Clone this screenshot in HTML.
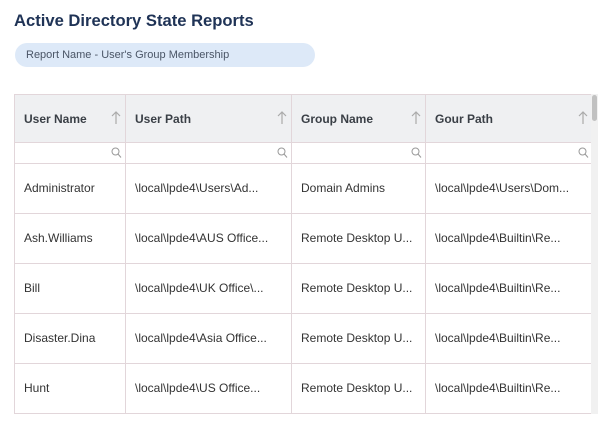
<!DOCTYPE html>
<html><head><style>
*{margin:0;padding:0;box-sizing:border-box}
body{width:612px;height:430px;background:#fff;font-family:"Liberation Sans",sans-serif;position:relative;overflow:hidden}
h1{position:absolute;left:14px;top:11px;font-size:16.6px;font-weight:bold;color:#1f3356;letter-spacing:0}
.pill{position:absolute;left:15px;top:43px;width:300px;height:24px;border-radius:12px;background:#dde9f8;font-size:11px;color:#4a5566;line-height:24px;padding-left:11px}
.tbl{position:absolute;left:14px;top:94px;width:578px;height:320px;border:1px solid #e2d6da;border-right:none;overflow:hidden}
.row{position:absolute;left:0;width:577px;border-bottom:1px solid #e2d6da}
.c{position:absolute;top:0;height:100%;border-right:1px solid #e2d6da;font-size:12px;color:#333;padding-left:9px;white-space:nowrap}
.hd{background:#eff0f2;top:0;height:48px}
.hd .c{font-weight:bold;color:#3a3f46;line-height:48px;font-size:12px}
.arrow{position:absolute;right:4px;top:16px}
.fl{top:48px;height:21px}
.q{position:absolute;right:3px;top:4px}
.d .c{line-height:49px}
.sb{position:absolute;left:591px;top:94px;width:7px;height:320px;background:#f1f1f1}
.th{position:absolute;left:592px;top:95px;width:5px;height:26px;background:#c1c1c1;border-radius:3px}
</style></head><body>
<h1>Active Directory State Reports</h1>
<div class="pill">Report Name - User's Group Membership</div>
<div class="tbl">
<div class="row hd">
<div class="c" style="left:0;width:111px">User Name<svg class="arrow" width="10" height="14" viewBox="0 0 10 14"><path d="M5 1v12M1 5l4-4 4 4" fill="none" stroke="#aaa" stroke-width="1.2"/></svg></div>
<div class="c" style="left:111px;width:166px">User Path<svg class="arrow" width="10" height="14" viewBox="0 0 10 14"><path d="M5 1v12M1 5l4-4 4 4" fill="none" stroke="#aaa" stroke-width="1.2"/></svg></div>
<div class="c" style="left:277px;width:134px">Group Name<svg class="arrow" width="10" height="14" viewBox="0 0 10 14"><path d="M5 1v12M1 5l4-4 4 4" fill="none" stroke="#aaa" stroke-width="1.2"/></svg></div>
<div class="c" style="left:411px;width:166px;border-right:none">Gour Path<svg class="arrow" width="10" height="14" viewBox="0 0 10 14"><path d="M5 1v12M1 5l4-4 4 4" fill="none" stroke="#aaa" stroke-width="1.2"/></svg></div>
</div>
<div class="row fl">
<div class="c" style="left:0;width:111px"><svg class="q" width="11" height="12" viewBox="0 0 11 12"><circle cx="4.5" cy="4.5" r="3.5" fill="none" stroke="#999"/><path d="M7 7l3 3.5" stroke="#999"/></svg></div>
<div class="c" style="left:111px;width:166px"><svg class="q" width="11" height="12" viewBox="0 0 11 12"><circle cx="4.5" cy="4.5" r="3.5" fill="none" stroke="#999"/><path d="M7 7l3 3.5" stroke="#999"/></svg></div>
<div class="c" style="left:277px;width:134px"><svg class="q" width="11" height="12" viewBox="0 0 11 12"><circle cx="4.5" cy="4.5" r="3.5" fill="none" stroke="#999"/><path d="M7 7l3 3.5" stroke="#999"/></svg></div>
<div class="c" style="left:411px;width:166px;border-right:none"><svg class="q" width="11" height="12" viewBox="0 0 11 12"><circle cx="4.5" cy="4.5" r="3.5" fill="none" stroke="#999"/><path d="M7 7l3 3.5" stroke="#999"/></svg></div>
</div>
<div class="row d" style="top:69px;height:50px">
<div class="c" style="left:0;width:111px">Administrator</div><div class="c" style="left:111px;width:166px">\local\lpde4\Users\Ad...</div><div class="c" style="left:277px;width:134px">Domain Admins</div><div class="c" style="left:411px;width:166px;border-right:none">\local\lpde4\Users\Dom...</div></div>
<div class="row d" style="top:119px;height:50px">
<div class="c" style="left:0;width:111px">Ash.Williams</div><div class="c" style="left:111px;width:166px">\local\lpde4\AUS Office...</div><div class="c" style="left:277px;width:134px">Remote Desktop U...</div><div class="c" style="left:411px;width:166px;border-right:none">\local\lpde4\Builtin\Re...</div></div>
<div class="row d" style="top:169px;height:50px">
<div class="c" style="left:0;width:111px">Bill</div><div class="c" style="left:111px;width:166px">\local\lpde4\UK Office\...</div><div class="c" style="left:277px;width:134px">Remote Desktop U...</div><div class="c" style="left:411px;width:166px;border-right:none">\local\lpde4\Builtin\Re...</div></div>
<div class="row d" style="top:219px;height:50px">
<div class="c" style="left:0;width:111px">Disaster.Dina</div><div class="c" style="left:111px;width:166px">\local\lpde4\Asia Office...</div><div class="c" style="left:277px;width:134px">Remote Desktop U...</div><div class="c" style="left:411px;width:166px;border-right:none">\local\lpde4\Builtin\Re...</div></div>
<div class="row d" style="top:269px;height:50px">
<div class="c" style="left:0;width:111px">Hunt</div><div class="c" style="left:111px;width:166px">\local\lpde4\US Office...</div><div class="c" style="left:277px;width:134px">Remote Desktop U...</div><div class="c" style="left:411px;width:166px;border-right:none">\local\lpde4\Builtin\Re...</div></div>
</div>
<div class="sb"></div><div class="th"></div>
</body></html>
